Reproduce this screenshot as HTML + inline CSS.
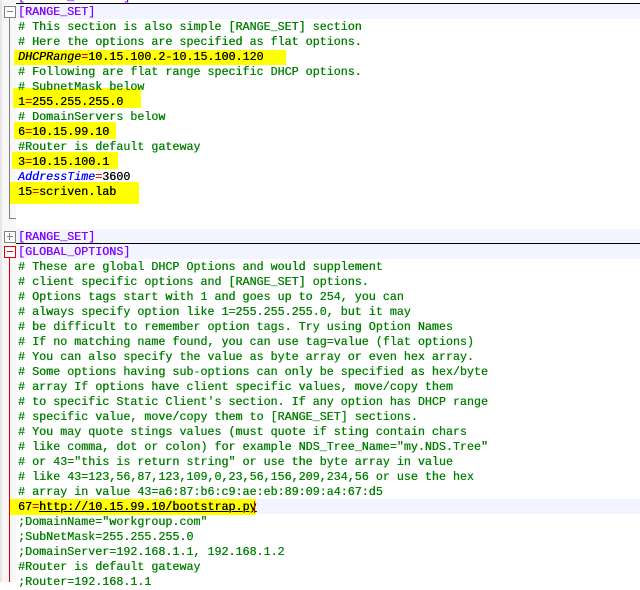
<!DOCTYPE html>
<html><head><meta charset="utf-8"><style>
body{margin:0;width:640px;height:582px;overflow:hidden;background:#fff;position:relative;font-family:"Liberation Mono",monospace;font-size:11.7px}
.r{position:absolute;left:0;width:640px;height:15px;line-height:15px;white-space:pre}
.t{position:absolute;left:18px;top:1px;text-shadow:0.3px 0 0 currentColor}
.c{color:#008000}.s{color:#8000ff}.e{color:#e00000}.k{color:#000}.b{color:#0000ff;font-style:italic}.i{font-style:italic}
.hl{position:absolute;background:#ffff00}
.bg{background:#f2f4ff}
</style></head><body>
<div style="position:absolute;left:0;top:0;width:2px;height:582px;background:#e6e6e6"></div>
<div style="position:absolute;left:2px;top:0;width:14px;height:582px;background:#f7f7f7"></div>
<div style="position:absolute;left:16px;top:3px;width:624px;height:1px;background:#000"></div>
<div class="r bg" style="top:4px;left:16px;width:624px"></div>
<div class="r bg" style="top:229px;left:16px;width:624px"></div>
<div class="r bg" style="top:244px;left:16px;width:624px"></div>
<div style="position:absolute;left:16px;top:243px;width:624px;height:1px;background:#000"></div>
<div class="r bg" style="top:499px;left:16px;width:624px"></div>
<!-- highlights -->
<div class="hl" style="left:14px;top:50px;width:272px;height:15px"></div>
<div class="hl" style="left:13px;top:88px;width:128px;height:20px"></div>
<div class="hl" style="left:14px;top:122px;width:102px;height:17px"></div>
<div class="hl" style="left:12px;top:152px;width:106px;height:17px"></div>
<div class="hl" style="left:10px;top:182px;width:129px;height:22px"></div>
<div class="hl" style="left:10px;top:499px;width:246px;height:16px"></div>
<!-- fold markers -->
<div style="position:absolute;left:4px;top:6px;width:10px;height:10px;border:1px solid #808080;background:#fff"></div>
<div style="position:absolute;left:7px;top:11px;width:6px;height:1px;background:#808080"></div>
<div style="position:absolute;left:9px;top:17px;width:1px;height:201px;background:#808080"></div>
<div style="position:absolute;left:9px;top:218px;width:7px;height:1px;background:#808080"></div>
<div style="position:absolute;left:4px;top:231px;width:10px;height:10px;border:1px solid #808080;background:#fff"></div>
<div style="position:absolute;left:7px;top:236px;width:6px;height:1px;background:#808080"></div>
<div style="position:absolute;left:9px;top:233px;width:1px;height:7px;background:#808080"></div>
<div style="position:absolute;left:4px;top:246px;width:10px;height:10px;border:1px solid #e00000;background:#fff"></div>
<div style="position:absolute;left:7px;top:251px;width:6px;height:1px;background:#e00000"></div>
<div style="position:absolute;left:9px;top:257px;width:1px;height:325px;background:#e00000"></div>

<div class="r" style="top:-11px"><span class="t s">[GLOBAL_OPTIONS]</span></div>
<div class="r" style="top:4px"><span class="t s">[RANGE_SET]</span></div>
<div class="r" style="top:19px"><span class="t c"># This section is also simple [RANGE_SET] section</span></div>
<div class="r" style="top:34px"><span class="t c"># Here the options are specified as flat options.</span></div>
<div class="r" style="top:49px"><span class="t"><span class="i">DHCPRange</span><span class="e">=</span>10.15.100.2-10.15.100.120</span></div>
<div class="r" style="top:64px"><span class="t c"># Following are flat range specific DHCP options.</span></div>
<div class="r" style="top:79px"><span class="t c"># SubnetMask below</span></div>
<div class="r" style="top:94px"><span class="t">1<span class="e">=</span>255.255.255.0</span></div>
<div class="r" style="top:109px"><span class="t c"># DomainServers below</span></div>
<div class="r" style="top:124px"><span class="t">6<span class="e">=</span>10.15.99.10</span></div>
<div class="r" style="top:139px"><span class="t c">#Router is default gateway</span></div>
<div class="r" style="top:154px"><span class="t">3<span class="e">=</span>10.15.100.1</span></div>
<div class="r" style="top:169px"><span class="t"><span class="b">AddressTime</span><span class="e">=</span>3600</span></div>
<div class="r" style="top:184px"><span class="t">15<span class="e">=</span>scriven.lab</span></div>
<div class="r" style="top:229px"><span class="t s">[RANGE_SET]</span></div>
<div class="r" style="top:244px"><span class="t s">[GLOBAL_OPTIONS]</span></div>
<div class="r" style="top:259px"><span class="t c"># These are global DHCP Options and would supplement</span></div>
<div class="r" style="top:274px"><span class="t c"># client specific options and [RANGE_SET] options.</span></div>
<div class="r" style="top:289px"><span class="t c"># Options tags start with 1 and goes up to 254, you can</span></div>
<div class="r" style="top:304px"><span class="t c"># always specify option like 1=255.255.255.0, but it may</span></div>
<div class="r" style="top:319px"><span class="t c"># be difficult to remember option tags. Try using Option Names</span></div>
<div class="r" style="top:334px"><span class="t c"># If no matching name found, you can use tag=value (flat options)</span></div>
<div class="r" style="top:349px"><span class="t c"># You can also specify the value as byte array or even hex array.</span></div>
<div class="r" style="top:364px"><span class="t c"># Some options having sub-options can only be specified as hex/byte</span></div>
<div class="r" style="top:379px"><span class="t c"># array If options have client specific values, move/copy them</span></div>
<div class="r" style="top:394px"><span class="t c"># to specific Static Client's section. If any option has DHCP range</span></div>
<div class="r" style="top:409px"><span class="t c"># specific value, move/copy them to [RANGE_SET] sections.</span></div>
<div class="r" style="top:424px"><span class="t c"># You may quote stings values (must quote if sting contain chars</span></div>
<div class="r" style="top:439px"><span class="t c"># like comma, dot or colon) for example NDS_Tree_Name="my.NDS.Tree"</span></div>
<div class="r" style="top:454px"><span class="t c"># or 43="this is return string" or use the byte array in value</span></div>
<div class="r" style="top:469px"><span class="t c"># like 43=123,56,87,123,109,0,23,56,156,209,234,56 or use the hex</span></div>
<div class="r" style="top:484px"><span class="t c"># array in value 43=a6:87:b6:c9:ae:eb:89:09:a4:67:d5</span></div>
<div class="r" style="top:499px"><span class="t">67<span class="e">=</span><u>http://10.15.99.10/bootstrap.py</u></span></div>
<div style="position:absolute;left:254px;top:501px;width:1px;height:12px;background:#c00000"></div>
<div class="r" style="top:514px"><span class="t c">;DomainName="workgroup.com"</span></div>
<div class="r" style="top:529px"><span class="t c">;SubNetMask=255.255.255.0</span></div>
<div class="r" style="top:544px"><span class="t c">;DomainServer=192.168.1.1, 192.168.1.2</span></div>
<div class="r" style="top:559px"><span class="t c">#Router is default gateway</span></div>
<div class="r" style="top:574px"><span class="t c">;Router=192.168.1.1</span></div>
</body></html>
